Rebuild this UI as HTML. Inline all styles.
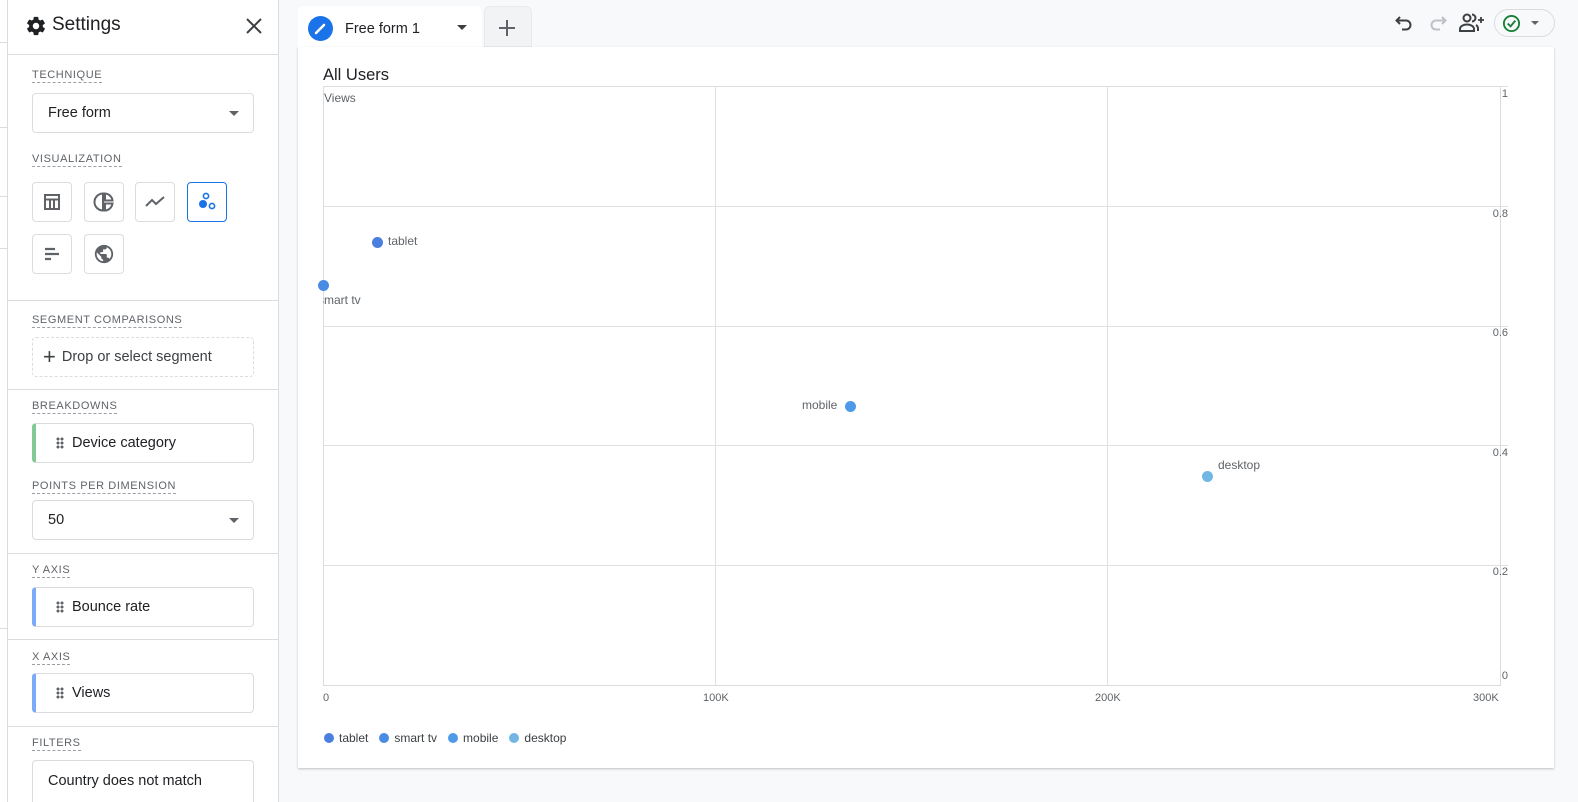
<!DOCTYPE html><html><head><style>
*{box-sizing:border-box;margin:0;padding:0}
html,body{width:1578px;height:802px;overflow:hidden}
body{background:#f8f9fa;font-family:"Liberation Sans",sans-serif;color:#3c4043;position:relative}
.a{position:absolute}
.lbl{position:absolute;left:32px;font-size:11px;letter-spacing:.6px;color:#5f6368;border-bottom:1px dashed #9aa0a6;padding-bottom:1px}
.box{position:absolute;left:32px;width:222px;height:40px;border:1px solid #dadce0;border-radius:4px;background:#fff;font-size:14.5px;color:#202124;display:flex;align-items:center;padding-left:15px}
.chip{padding-left:20px;border-left:4px solid #7baaf7}
.chip .d{display:inline-block;width:8px;height:12px;margin-right:8px;background:radial-gradient(circle,#5f6368 1.4px,transparent 1.6px) 0 0/4px 4px}
.sep{position:absolute;left:8px;width:270px;height:1px;background:#dadce0}
.vb{position:absolute;width:40px;height:40px;border:1px solid #dadce0;border-radius:4px;background:#fff;display:flex;align-items:center;justify-content:center}
.caret{position:absolute;right:14px;top:17px;border:5px solid transparent;border-top-color:#5f6368;border-bottom:0}
.gl{position:absolute;background:#e0e0e0}
.xl{position:absolute;top:692px;font-size:11px;color:#5f6368}
.pt{position:absolute;width:11px;height:11px;border-radius:50%}
.pl{position:absolute;font-size:12px;color:#5f6368}
.yl{position:absolute;left:1484px;width:24px;text-align:right;font-size:11px;color:#5f6368}
</style></head><body>
<div class="a" style="left:0;top:0;width:8px;height:802px;background:#fff"></div>
<div class="a" style="left:0;top:42px;width:7px;height:1px;background:#dadce0"></div>
<div class="a" style="left:0;top:127px;width:7px;height:1px;background:#dadce0"></div>
<div class="a" style="left:0;top:196px;width:7px;height:1px;background:#dadce0"></div>
<div class="a" style="left:0;top:248px;width:7px;height:1px;background:#dadce0"></div>
<div class="a" style="left:0;top:628px;width:7px;height:1px;background:#dadce0"></div>
<div class="a" style="left:7px;top:0;width:272px;height:802px;background:#fff;border-left:1px solid #dadce0;border-right:1px solid #dadce0;overflow:hidden">
</div>
<svg class="a" style="left:25px;top:15px" width="22" height="22" viewBox="0 0 24 24"><path fill="#202124" d="M19.4 13c.04-.3.06-.66.06-1s-.02-.7-.06-1l2.1-1.65c.2-.15.24-.42.12-.64l-2-3.460c-.12-.22-.39-.3-.61-.22l-2.49 1c-.52-.4-1.08-.73-1.690-.98l-.38-2.65A.49.49 0 0 0 14 2h-4c-.25 0-.46.18-.49.42l-.38 2.65c-.61.25-1.17.59-1.69.98l-2.49-1c-.23-.09-.49 0-.61.22l-2 3.46c-.13.22-.07.49.12.64L4.57 11c-.04.34-.07.67-.07 1s.03.66.07 1l-2.110 1.65c-.19.15-.25.42-.12.64l2 3.46c.12.22.39.3.61.22l2.49-1c.52.4 1.08.73 1.69.98l.38 2.65c.03.24.24.42.49.42h4c.25 0 .46-.18.49-.42l.38-2.65c.61-.25 1.17-.59 1.69-.98l2.49 1c.23.09.49 0 .61-.22l2-3.46c.12-.22.07-.49-.12-.64L19.4 13zM12 15.5c-1.93 0-3.5-1.57-3.5-3.5s1.57-3.5 3.5-3.5 3.5 1.57 3.5 3.5-1.57 3.5-3.5 3.5z"/><circle cx="12" cy="12" r="2" fill="#fff"/></svg>
<div class="a" style="left:52px;top:14px;font-size:19px;color:#202124">Settings</div>
<svg class="a" style="left:245px;top:17px" width="18" height="18" viewBox="0 0 18 18"><path d="M2 2L16 16M16 2L2 16" stroke="#3c4043" stroke-width="2"/></svg>
<div class="sep" style="top:54px"></div>
<div class="lbl" style="top:69px">TECHNIQUE</div>
<div class="box" style="top:93px">Free form<span class="caret"></span></div>
<div class="lbl" style="top:153px">VISUALIZATION</div>
<div class="vb" style="left:32px;top:182px"><svg width="20" height="20" viewBox="0 0 20 20"><rect x="3" y="3" width="14" height="14" fill="none" stroke="#5f6368" stroke-width="2"/><path d="M3 7.5H17M8 7.5V17M12 7.5V17" stroke="#5f6368" stroke-width="2"/></svg></div>
<div class="vb" style="left:84px;top:182px"><svg width="22" height="22" viewBox="0 0 22 22"><path d="M10 2.5A8.5 8.5 0 0 0 10 19.5Z M10 6V16M12 2.5V9.5H19.5A8 8 0 0 0 12 2.5ZM12 12.5V19.5A8 8 0 0 0 19.5 12.5Z" fill="none" stroke="#5f6368" stroke-width="2"/></svg></div>
<div class="vb" style="left:135px;top:182px"><svg width="22" height="22" viewBox="0 0 22 22"><path d="M2 15L8 9L12 13L20 6" fill="none" stroke="#5f6368" stroke-width="2"/></svg></div>
<div class="vb" style="left:187px;top:182px;border-color:#1a73e8"><svg width="22" height="22" viewBox="0 0 22 22"><circle cx="7" cy="13" r="4" fill="#1a73e8"/><circle cx="10" cy="5" r="2.6" fill="none" stroke="#1a73e8" stroke-width="1.6"/><circle cx="16" cy="15" r="2.6" fill="none" stroke="#1a73e8" stroke-width="1.6"/></svg></div>
<div class="vb" style="left:32px;top:234px"><svg width="20" height="20" viewBox="0 0 20 20"><path d="M3 5H13M3 10H17M3 15H9" stroke="#5f6368" stroke-width="2.2"/></svg></div>
<div class="vb" style="left:84px;top:234px"><svg width="22" height="22" viewBox="0 0 24 24"><path fill="#5f6368" d="M12 2C6.48 2 2 6.48 2 12s4.48 10 10 10 10-4.48 10-10S17.52 2 12 2zm-1 17.93c-3.95-.49-7-3.850-7-7.93 0-.62.08-1.21.21-1.79L9 15v1c0 1.1.9 2 2 2v1.93zm6.9-2.54c-.26-.81-1-1.390-1.9-1.39h-1v-3c0-.55-.45-1-1-1H8v-2h2c.55 0 1-.45 1-1V7h2c1.1 0 2-.9 2-2v-.41c2.93 1.19 5 4.06 5 7.41 0 2.08-.8 3.97-2.1 5.39z"/></svg></div>
<div class="sep" style="top:300px"></div>
<div class="lbl" style="top:314px">SEGMENT COMPARISONS</div>
<div class="box" style="top:337px;border:1px dashed #dadce0;color:#3c4043;padding-left:10px"><span style="font-size:22px;font-weight:300;margin-right:6px;line-height:1">+</span>Drop or select segment</div>
<div class="sep" style="top:389px"></div>
<div class="lbl" style="top:400px">BREAKDOWNS</div>
<div class="box chip" style="top:423px;border-left-color:#81c995"><span class="d"></span>Device category</div>
<div class="lbl" style="top:480px">POINTS PER DIMENSION</div>
<div class="box" style="top:500px">50<span class="caret"></span></div>
<div class="sep" style="top:553px"></div>
<div class="lbl" style="top:564px">Y AXIS</div>
<div class="box chip" style="top:587px"><span class="d"></span>Bounce rate</div>
<div class="sep" style="top:639px"></div>
<div class="lbl" style="top:651px">X AXIS</div>
<div class="box chip" style="top:673px"><span class="d"></span>Views</div>
<div class="sep" style="top:726px"></div>
<div class="lbl" style="top:737px">FILTERS</div>
<div class="box" style="top:760px;height:42px;align-items:flex-start;padding-top:12px;border-bottom:none;border-radius:4px 4px 0 0">Country does not match</div>

<div class="a" style="left:298px;top:6px;width:184px;height:42px;background:#fff;border-radius:6px 6px 0 0"></div>
<div class="a" style="left:308px;top:16px;width:25px;height:25px;border-radius:50%;background:#1a73e8"></div>
<svg class="a" style="left:313px;top:21px" width="15" height="15" viewBox="0 0 15 15"><path d="M3 12L11 4" stroke="#fff" stroke-width="2.5" stroke-linecap="round"/></svg>
<div class="a" style="left:345px;top:21px;font-size:14.5px;color:#202124">Free form 1</div>
<div class="a" style="left:457px;top:25px;border:5px solid transparent;border-top-color:#3c4043;border-bottom:0"></div>
<div class="a" style="left:484px;top:6px;width:48px;height:41px;background:#f1f3f4;border:1px solid #e8eaed;border-radius:6px 6px 0 0"></div>
<svg class="a" style="left:498px;top:19px" width="18" height="18"><path d="M9 1V17M1 9H17" stroke="#5f6368" stroke-width="2"/></svg>
<svg class="a" style="left:1394px;top:13px" width="20" height="20" viewBox="0 0 20 20"><path d="M6 4L2.5 7.5L6 11M2.5 7.5H12a4.5 4.5 0 0 1 0 9H8" fill="none" stroke="#3c4043" stroke-width="2"/></svg>
<svg class="a" style="left:1428px;top:13px" width="20" height="20" viewBox="0 0 20 20"><path d="M14 4L17.5 7.5L14 11M17.5 7.5H8a4.5 4.5 0 0 0 0 9H12" fill="none" stroke="#bdc1c6" stroke-width="2"/></svg>
<svg class="a" style="left:1459px;top:12px" width="26" height="22" viewBox="0 0 26 22"><circle cx="8" cy="6" r="3.5" fill="none" stroke="#3c4043" stroke-width="2"/><path d="M1 19v-2c0-3 4-4.5 7-4.5s7 1.5 7 4.5v2z" fill="none" stroke="#3c4043" stroke-width="2"/><path d="M13 2.5a3.5 3.5 0 0 1 0 7M17 13c1.5.8 2 2 2 4v2" fill="none" stroke="#3c4043" stroke-width="2"/><path d="M22 5v6M19 8h6" stroke="#3c4043" stroke-width="1.8"/></svg>
<div class="a" style="left:1494px;top:9px;width:61px;height:28px;border:1px solid #dadce0;border-radius:14px;background:#f8f9fa"></div>
<svg class="a" style="left:1502px;top:14px" width="19" height="19" viewBox="0 0 20 20"><circle cx="10" cy="10" r="8" fill="none" stroke="#188038" stroke-width="2"/><path d="M6 10l3 3 5-6" fill="none" stroke="#188038" stroke-width="2"/></svg>
<div class="a" style="left:1531px;top:21px;border:4px solid transparent;border-top-color:#5f6368;border-bottom:0"></div>

<div class="a" style="left:298px;top:47px;width:1256px;height:721px;background:#fff;box-shadow:0 1px 2px rgba(60,64,67,.3)"></div>
<div class="a" style="left:323px;top:66px;font-size:16.5px;color:#202124">All Users</div>
<div class="a" style="left:323px;top:86px;width:1178px;height:600px;border:1px solid #dadce0"></div>
<div class="gl" style="left:715px;top:87px;width:1px;height:598px"></div>
<div class="gl" style="left:1107px;top:87px;width:1px;height:598px"></div>
<div class="gl" style="left:324px;top:206px;width:1176px;height:1px"></div>
<div class="gl" style="left:324px;top:326px;width:1176px;height:1px"></div>
<div class="gl" style="left:324px;top:445px;width:1176px;height:1px"></div>
<div class="gl" style="left:324px;top:565px;width:1176px;height:1px"></div>
<div class="gl" style="left:1500px;top:86px;width:8px;height:1px"></div>
<div class="gl" style="left:1500px;top:206px;width:8px;height:1px"></div>
<div class="gl" style="left:1500px;top:326px;width:8px;height:1px"></div>
<div class="gl" style="left:1500px;top:445px;width:8px;height:1px"></div>
<div class="gl" style="left:1500px;top:565px;width:8px;height:1px"></div>
<div class="a" style="left:324px;top:91px;font-size:12px;color:#5f6368">Views</div>
<div class="yl" style="top:88px">1</div>
<div class="yl" style="top:208px">0.8</div>
<div class="yl" style="top:327px">0.6</div>
<div class="yl" style="top:447px">0.4</div>
<div class="yl" style="top:566px">0.2</div>
<div class="yl" style="top:670px">0</div>
<div class="xl" style="left:323px">0</div>
<div class="xl" style="left:703px">100K</div>
<div class="xl" style="left:1095px">200K</div>
<div class="xl" style="left:1473px">300K</div>
<div class="pt" style="left:372px;top:237px;background:#4a7fe0"></div>
<div class="pl" style="left:388px;top:234px">tablet</div>
<div class="pt" style="left:318px;top:280px;background:#4a8be3"></div>
<div class="pl" style="left:318px;top:293px;clip-path:inset(0 0 0 5px)">smart tv</div>
<div class="pt" style="left:845px;top:401px;background:#4f9ae8"></div>
<div class="pl" style="left:802px;top:398px">mobile</div>
<div class="pt" style="left:1202px;top:471px;background:#72b7e4"></div>
<div class="pl" style="left:1218px;top:458px">desktop</div>
<div class="a" style="left:324px;top:731px;font-size:12px;color:#3c4043;display:flex;align-items:center;gap:5px">
<span style="width:10px;height:10px;border-radius:50%;background:#4a7fe0"></span>tablet
<span style="width:10px;height:10px;border-radius:50%;background:#4a8be3;margin-left:6px"></span>smart tv
<span style="width:10px;height:10px;border-radius:50%;background:#4f9ae8;margin-left:6px"></span>mobile
<span style="width:10px;height:10px;border-radius:50%;background:#72b7e4;margin-left:6px"></span>desktop
</div>
</body></html>
